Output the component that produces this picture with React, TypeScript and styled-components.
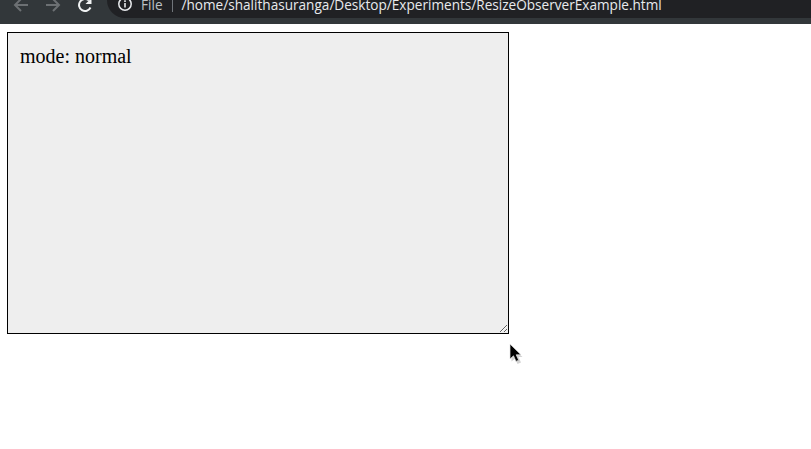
import React from "react";
import styled, { createGlobalStyle } from "styled-components";

const GlobalStyle = createGlobalStyle`
  html, body {
    margin: 0;
    padding: 0;
    background: #fff;
    overflow: hidden;
  }
`;

const Page = styled.div`
  position: relative;
  width: 811px;
  height: 449px;
  overflow: hidden;
`;

const Toolbar = styled.div`
  display: flex;
  align-items: center;
  height: 24px;
  padding-left: 13px;
  background: #32373a;
  overflow: hidden;
`;

const NavIcon = styled.svg<{ $gap: number; $lit?: boolean }>`
  flex: none;
  width: 16px;
  height: 16px;
  margin-top: -15px;
  margin-right: ${(p) => p.$gap}px;
  fill: none;
  stroke: ${(p) => (p.$lit ? "#f1f3f4" : "#6c7073")};
  stroke-width: 2;
`;

const UrlBar = styled.div`
  flex: 1;
  display: flex;
  align-items: center;
  align-self: flex-start;
  height: 36px;
  margin-top: -18px;
  padding-left: 10px;
  background: #202124;
  border-radius: 18px 0 0 18px;
  font: 13.6px "Open Sans", "Noto Sans", sans-serif;
  white-space: nowrap;
`;

const InfoIcon = styled.svg`
  flex: none;
  width: 16px;
  height: 16px;
  margin-top: 8px;
  margin-right: 8px;
`;

const Scheme = styled.span`
  margin-top: 8px;
  color: #bdc1c6;
`;

const Divider = styled.span`
  width: 1px;
  height: 16px;
  margin: 8px 9px 0 9px;
  background: #70757a;
`;

const Path = styled.span`
  margin-top: 8px;
  color: #e8eaed;
`;

const Content = styled.div`
  padding: 8px 7px;
`;

const Sample = styled.textarea`
  display: block;
  box-sizing: border-box;
  width: 502px;
  height: 302px;
  margin: 0;
  padding: 11px 12px 12px;
  border: 1px solid #000;
  border-radius: 0;
  outline: none;
  resize: both;
  background: #eee;
  color: #000;
  font: 20px/24px "Liberation Serif", serif;
`;

const Pointer = styled.svg`
  position: absolute;
  left: 509px;
  top: 343px;
  width: 14px;
  height: 21px;
`;

export default function App() {
  return (
    <Page>
      <GlobalStyle />
      <Toolbar>
        <NavIcon $gap={16} viewBox="0 0 16 16">
          <path d="M15 8H2M8 2 2 8l6 6" />
        </NavIcon>
        <NavIcon $gap={16} viewBox="0 0 16 16">
          <path d="M1 8h13M8 2l6 6-6 6" />
        </NavIcon>
        <NavIcon $gap={14} $lit viewBox="0 0 16 16">
          <path d="M13.500 10.500A6 6 0 1 1 12 3.500" />
          <path d="M14.500 1v6h-6z" fill="#f1f3f4" stroke="none" />
        </NavIcon>
        <UrlBar>
          <InfoIcon viewBox="0 0 16 16">
            <circle cx="8" cy="8" r="6.200" fill="none" stroke="#e8eaed" strokeWidth="1.500" />
            <path d="M7.200 7h1.600v4.500H7.200zM7.200 4.300h1.600v1.600H7.200z" fill="#e8eaed" />
          </InfoIcon>
          <Scheme>File</Scheme>
          <Divider />
          <Path>/home/shalithasuranga/Desktop/Experiments/ResizeObserverExample.html</Path>
        </UrlBar>
      </Toolbar>
      <Content>
        <Sample defaultValue="mode: normal" spellCheck={false} />
      </Content>
      <Pointer viewBox="0 0 14 21">
        <path d="M2.500 3.500v15l3.500-3 2.500 5.500 3.500-1.500-2.500-5.500H13.500z" fill="#b5b5b5" opacity="0.6" />
        <path d="M1 1v15l3.500-3.200 2.500 5.600 2.700-1.200-2.500-5.400H12z" fill="#000" stroke="#e6e6e6" strokeWidth="0.700" />
      </Pointer>
    </Page>
  );
}
